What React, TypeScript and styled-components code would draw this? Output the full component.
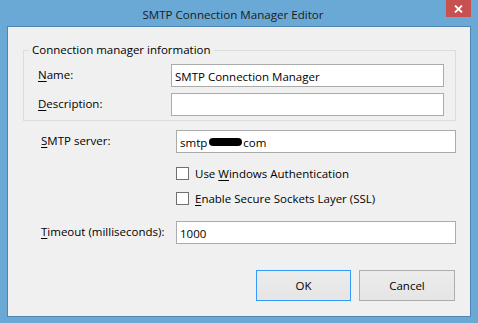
import React from "react";
import styled, { createGlobalStyle } from "styled-components";

const GlobalStyle = createGlobalStyle`
  html, body {
    margin: 0;
    padding: 0;
    background: #6aa9d6;
  }
  * {
    box-sizing: border-box;
  }
`;

const FONT = `"Segoe UI", "Open Sans", "Noto Sans", sans-serif`;

const Window = styled.div`
  position: relative;
  width: 478px;
  height: 323px;
  display: flex;
  flex-direction: column;
  padding: 0 7px 6px;
  background: #6aa9d6;
  font-family: ${FONT};
  font-size: 11.5px;
  color: #000;
`;

const TitleBar = styled.div`
  height: 26px;
  display: flex;
  align-items: center;
  justify-content: center;
  padding: 2px 12px 0 0;
  color: #1b1b1b;
  font-size: 11.6px;
`;

const CloseButton = styled.div`
  position: absolute;
  top: 0;
  right: 7px;
  width: 25px;
  height: 17px;
  background: #c75050;
  display: flex;
  align-items: center;
  justify-content: center;
`;

const Client = styled.div`
  flex: 1;
  border: 1px solid #4f86b1;
  background: #f0f0f0;
  padding-top: 15px;
  display: flex;
  flex-direction: column;
`;

const GroupBox = styled.fieldset`
  margin: 0 14px 0 15px;
  padding: 6px 11px 4px 14px;
  border: 1px solid #dcdcdc;
  display: grid;
  grid-template-columns: 133px 273px;
  row-gap: 6px;
`;

const Legend = styled.legend`
  margin-left: -9px;
  padding: 0 3px;
  line-height: 16px;
`;

const Label = styled.label`
  padding-top: 3px;
  line-height: 16px;
  white-space: nowrap;
`;

const Key = styled.span`
  text-decoration: underline;
  text-underline-offset: 2px;
`;

const TextBox = styled.div<{ $width?: number }>`
  width: ${(p) => (p.$width ? `${p.$width}px` : "100%")};
  height: 23px;
  border: 1px solid #ababab;
  background: #fff;
  padding: 1px 0 0 3px;
  display: flex;
  align-items: center;
  white-space: nowrap;
`;

const Redacted = styled.span`
  display: inline-block;
  width: 33px;
  height: 8px;
  margin: 0 1px 0 2px;
  border-radius: 4px;
  background: #000;
`;

const Form = styled.div`
  padding: 9px 14px 0 33px;
  display: flex;
  flex-direction: column;
`;

const Row = styled.div<{ $top?: number }>`
  display: grid;
  grid-template-columns: 135px 280px;
  align-items: start;
  margin-top: ${(p) => p.$top ?? 0}px;
`;

const CheckRow = styled.div<{ $top?: number }>`
  margin-left: 135px;
  margin-top: ${(p) => p.$top ?? 0}px;
  height: 13px;
  display: flex;
  align-items: center;
  gap: 6px;
  white-space: nowrap;
`;

const CheckBox = styled.span`
  width: 13px;
  height: 13px;
  border: 1px solid #707070;
  background: #fff;
  flex: none;
`;

const Buttons = styled.div`
  margin: 26px 15px 0 0;
  display: flex;
  justify-content: flex-end;
  gap: 8px;
`;

const Button = styled.div<{ $default?: boolean; $width: number }>`
  width: ${(p) => p.$width}px;
  height: 31px;
  border: 1px solid ${(p) => (p.$default ? "#3399ff" : "#adadad")};
  background: linear-gradient(#ececec, #e5e5e5);
  display: flex;
  align-items: center;
  justify-content: center;
`;

export default function App() {
  return (
    <>
      <GlobalStyle />
      <Window>
        <TitleBar>SMTP Connection Manager Editor</TitleBar>
        <CloseButton>
          <svg width="9" height="8" viewBox="0 0 9 8">
            <path d="M1 0.5 L8 7.5 M8 0.5 L1 7.5" stroke="#fff" strokeWidth="1.8" />
          </svg>
        </CloseButton>
        <Client>
          <GroupBox>
            <Legend>Connection manager information</Legend>
            <Label>
              <Key>N</Key>ame:
            </Label>
            <TextBox>SMTP Connection Manager</TextBox>
            <Label>
              <Key>D</Key>escription:
            </Label>
            <TextBox />
          </GroupBox>
          <Form>
            <Row>
              <Label>
                <Key>S</Key>MTP server:
              </Label>
              <TextBox>
                smtp
                <Redacted />
                com
              </TextBox>
            </Row>
            <CheckRow $top={14}>
              <CheckBox />
              <span>
                Use <Key>W</Key>indows Authentication
              </span>
            </CheckRow>
            <CheckRow $top={12}>
              <CheckBox />
              <span>
                <Key>E</Key>nable Secure Sockets Layer (SSL)
              </span>
            </CheckRow>
            <Row $top={16}>
              <Label>
                <Key>T</Key>imeout (milliseconds):
              </Label>
              <TextBox>1000</TextBox>
            </Row>
          </Form>
          <Buttons>
            <Button $default $width={95}>OK</Button>
            <Button $width={96}>Cancel</Button>
          </Buttons>
        </Client>
      </Window>
    </>
  );
}
